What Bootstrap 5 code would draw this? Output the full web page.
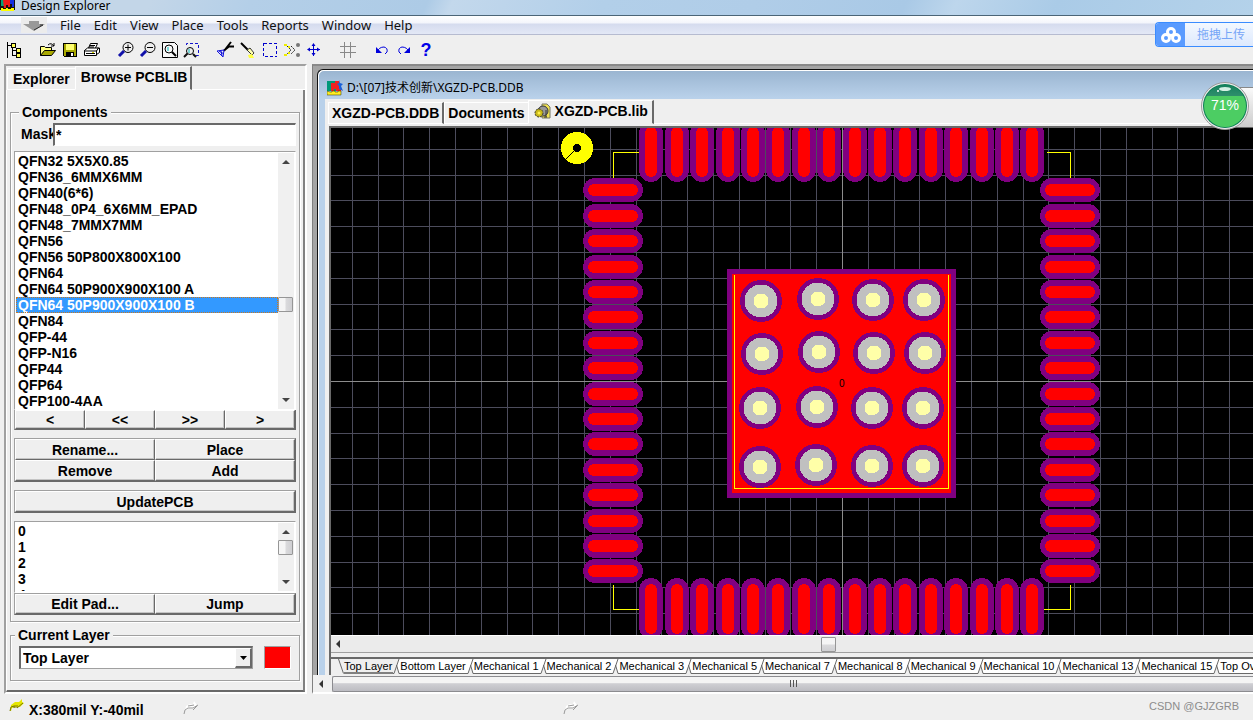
<!DOCTYPE html>
<html lang="en">
<head>
<meta charset="utf-8">
<meta name="viewport" content="width=device-width, initial-scale=1">
<title>Design Explorer</title>
<link href="https://cdn.jsdelivr.net/npm/bootstrap@5.3.0/dist/css/bootstrap.min.css" rel="stylesheet">
<style>
  :root { --face:#efefef; --shade:#a0a0a0; --dark:#696969; --ui:"Liberation Sans",Arial,sans-serif; --seg:"Noto Sans","Noto Sans CJK SC",sans-serif; }
  body { background:var(--face); color:#000; font:bold 14px/16px var(--ui); }
  button, input, select { font:inherit; color:inherit; padding:0; border-radius:0; }
  svg { display:block; flex:none; }
  .app-title { height:16px; padding:0 0 4px; background:linear-gradient(115deg,#c3d6e8 0 12%,#b4cfe8 20%,#adcbe6 34%,#c3d8ec 36%,#b2cfe9 48%,#b0cde8 60%,#a9c9e6 72%,#bdd6ec 76%,#aacbe7 84%,#b4d2ea); border-bottom:1px solid #4b6577; font:12px/11px var(--seg); }
  .menu-strip { height:19px; background:linear-gradient(#fff 0,#f3f5fb 7px,#d5dbee 8px,#e3e8f6 18px); border-bottom:1px solid #b6bbd0; font:13px/18px var(--seg); gap:13px; padding-left:21px; }
  .menu-strip a { color:#111; text-decoration:none; }
  .sys-mark { width:26px; height:16px; background:#ececec; }
  .tool-strip { height:29px; padding-left:3px; }
  .tool-strip button { width:22px; height:22px; border:0; background:none; display:grid; place-items:center; }
  .tool-strip i { width:12px; }
  .tool-strip .help-btn { font:bold 18px/20px "Liberation Sans",sans-serif; color:#0000e8; }

  .side { width:303px; margin:0 5px 0 4px; border:2px solid var(--shade); border-right-color:#fff; border-bottom:2px solid #fff; }
  .side-tabs { height:24px; padding-left:1px; align-items:flex-end; }
  .side-tabs button, .doc-tabs button { border:0; background:var(--face); border-top:1px solid #fff; border-left:1px solid #fff; border-bottom:1px solid #fff; height:22px; white-space:nowrap; padding:0 3px; }
  .side-tabs button { padding:0 5px; }
  .side-tabs .on { height:24px; border-bottom-color:var(--face); border-right:2px solid var(--dark); padding:0 3px 3px 5px; }
  .side-tabs .fill, .doc-tabs .fill { border-bottom:1px solid #fff; align-self:stretch; }
  .side-page { border-left:1px solid #fff; border-right:2px solid #808080; border-bottom:2px solid var(--dark); padding:15px 3px 8px 3px; }
  .group-box { border:1px solid var(--shade); box-shadow:1px 1px #fff, inset 1px 1px #fff; padding:0 3px 6px; margin:0; min-width:0; }
  .group-box legend { float:none; width:auto; font:inherit; margin:0 0 0 5px; padding:0 3px; background:var(--face); line-height:14px; }
  .mask-line { margin:4px 0 5px; }
  .mask-line label { width:39px; padding-left:7px; overflow:hidden; line-height:22px; }
  .mask-line input { min-width:0; height:23px; border:1px solid #fff; border-top:2px solid var(--dark); border-left:2px solid var(--dark); background:#fff; padding-left:1px; }
  .sunk { background:#fff; border:1px solid var(--shade); border-right-color:#fff; border-bottom-color:#fff; padding:1px; }
  .parts { padding-bottom:0; }
  .rows button { display:block; width:100%; border:0; background:none; text-align:left; padding-left:2px; line-height:16px; white-space:nowrap; }
  .rows button.on { background:#3399ff; color:#fff; outline:1px dotted #c87820; outline-offset:-1px; }
  .vbar { width:16px; background:#f0f0f0; }
  .vbar svg { margin:6px auto; }
  .above { flex:8 0 0; }
  .below { flex:5 0 0; }
  .knob { border:1px solid #969696; border-radius:1px; background:linear-gradient(90deg,#f5f5f5 0 45%,#dadadc 55%,#cfcfd2); width:15px; height:15px; flex:none; }
  .btn-grid { background:var(--shade); border:1px solid var(--shade); border-right-color:var(--dark); border-bottom-color:var(--dark); display:grid; }
  .btn-grid button { background:var(--face); height:21px; line-height:18px; border:1px solid #fff; border-right:1px solid var(--dark); border-bottom:1px solid var(--dark); box-shadow:inset -1px -1px #c4c4c4; }
  .btn-grid.low button { height:20px; line-height:17px; }
  .btn-grid.four { border-top:0; }
  .btn-grid.four button { height:19px; line-height:16px; }
  .two { grid-template-columns:1fr 1fr; }
  .four { grid-template-columns:repeat(4,1fr); }
  .pads { height:72px; }
  .layer-box { margin-top:6px; padding-bottom:11px; }
  .layer-box legend { margin-left:1px; }
  .layer-box > div { padding:4px 5px 0 5px; gap:11px; }
  .combo { border:1px solid var(--shade); border-top:2px solid var(--dark); border-left:2px solid var(--dark); background:#fff; position:relative; width:235px; height:23px; }
  .combo select { appearance:none; border:0; background:#fff; width:100%; height:100%; padding-left:2px; outline:0; }
  .combo span { position:absolute; right:0; top:0; bottom:0; width:17px; background:var(--face); border:1px solid #fff; border-right:2px solid var(--dark); border-bottom:2px solid var(--dark); display:grid; place-items:center; pointer-events:none; }
  .swatch { width:27px; height:23px; background:red; border:1px solid var(--shade); border-right-color:#fff; border-bottom-color:#fff; }

  .desk { background:#a5a5a5; border-top:2px solid #8a8a8a; border-left:1px solid #808080; border-bottom:2px solid #fff; min-width:0; }
  .doc-win { margin:3px 0 0 4px; border:1px solid #111; border-right:0; border-bottom:0; border-radius:6px 0 0 0; background:linear-gradient(#99b4d0,#b9d1ea 28px); box-shadow:inset 1px 1px #fff; padding-left:7px; min-width:0; }
  .doc-title { height:29px; padding:6px 2px 0; font:12px/16px var(--seg); gap:4px; }
  .doc-body { background:var(--face); min-width:0; }
  .doc-tabs { height:25px; padding:1px 0 0 3px; align-items:flex-end; }
  .doc-tabs .on { height:24px; border-bottom-color:var(--face); padding:0 4px 3px 5px; gap:3px; }
  .doc-tabs .edge { border-right:2px solid var(--dark); }
  .board-frame { margin:2px 0 0 4px; border:2px solid var(--dark); border-right:0; border-bottom:0; min-width:0; }
  .board-wrap { height:507px; min-width:0; overflow:hidden; }
  .board { background:#000; width:100%; height:100%; }
  .hbar { height:18px; background:#ebebeb; border-top:1px solid #fff; border-bottom:1px solid var(--shade); }
  .hbar .knob { background:linear-gradient(#f5f5f5 0 45%,#dadadc 55%,#cfcfd2); margin-left:20px; }
  .layer-tabs { margin-top:4px; border-top:2px solid var(--dark); height:18px; overflow:hidden; font:11px/15px var(--ui); }
  .layer-tabs button { border:0; border-bottom:1px solid var(--dark); background:#fff; height:15px; white-space:nowrap; flex:none; padding:0 1px 0 0; }
  .layer-tabs .on { background:var(--face); border-bottom:2px solid #808080; }
  .long-bar { height:17px; background:#f0f0f0; }
  .long-knob { border:1px solid #8c8c90; border-right:0; border-radius:2px 0 0 2px; background:linear-gradient(#f4f4f4 0 40%,#cfcfd3 48%,#bcbcc2); height:16px; }
  .foot { height:26px; padding:4px 14px 0 9px; }
  .foot .mark-text { font:11px/16px var(--ui); color:#8c8c8c; }
  .foot-left { width:174px; }
  .ghost { gap:364px; padding-top:3px; }
  .pill { position:absolute; right:0; top:22px; height:25px; width:98px; border:1px solid #3a8cff; border-right:0; border-radius:4px 0 0 4px; background:linear-gradient(#f3f8ff,#dde9fd); font:12px/23px var(--seg); color:#76a5f7; overflow:hidden; }
  .pill span { width:29px; background:#5a9bff; }
  .orb { position:absolute; right:3px; top:80px; }
  .orb-tab { position:absolute; right:0; top:87px; width:22px; height:40px; background:linear-gradient(#fafafa,#ccc); border-top:1px solid #888; }
</style>
</head>
<body>
<div class="d-flex flex-column min-vh-100 position-relative overflow-hidden">
  <header>
    <div class="app-title d-flex">
      <svg width="21" height="12" viewBox="0 0 21 12"><path d="M0 0h15v10H0z" fill="#111"/><path d="M1 0h3v6H1z" fill="#00a078"/><path d="M3 0h7v7H8V5H6v3H4z" fill="#f01818"/><path d="M10 0h4v7h-2V4h-2z" fill="#1030e0"/><path d="M1 11V8h2v1h3V8h2v1h3V8h3v3z" fill="#ff0"/></svg>
      <span>Design Explorer</span>
    </div>
    <nav class="menu-strip d-flex align-items-center" aria-label="Main menu">
      <span class="sys-mark"><svg width="26" height="16"><path d="M2 7h6V4h10v3h6l-11 7z" fill="#999"/><path d="M13 13l9-5h-3" stroke="#333" fill="none"/></svg></span>
      <a href="#">File</a><a href="#">Edit</a><a href="#">View</a><a href="#">Place</a><a href="#">Tools</a><a href="#">Reports</a><a href="#">Window</a><a href="#">Help</a>
    </nav>
    <div class="tool-strip d-flex align-items-center" role="toolbar" aria-label="Tools">
      <button aria-label="Panel"><svg width="16" height="18" shape-rendering="crispEdges" fill="none" stroke="#000"><path d="M1.500 1v16M1 4.500h4M6.500 7v8M6 9.500h4M6 14.500h4"/><path d="M5.500 2.500h4v4h-4zM10.500 7.500h4v4h-4zM10.500 12.500h4v4h-4z" fill="#ff5"/></svg></button>
      <i></i>
      <button aria-label="Open"><svg width="18" height="16"><path d="M1.500 13.500v-9h4l1 1h6v3" fill="#ffff80" stroke="#000"/><path d="M1.500 13.500l4-5h11l-4 5z" fill="#a8a800" stroke="#000"/><path d="M9 3q3-3 6 1m0-3v3h-3" fill="none" stroke="#000"/></svg></button>
      <button aria-label="Save"><svg width="16" height="16" shape-rendering="crispEdges"><path d="M1.500 1.500h13v13h-12l-1-1z" fill="#a8a800" stroke="#000"/><path d="M4 2h8v6H4z" fill="#ffff70"/><path d="M4 10h8v5H4z" fill="#000"/><path d="M9 11h2v3H9z" fill="#fff"/></svg></button>
      <button aria-label="Print"><svg width="18" height="16"><path d="M5.500 6l2-4.500h7L12.500 6M1.500 8.500l3-2.500h11l-2 3h-12zM1.500 8.500v5h12v-5m0 4l3-2V6h-2M7 3.500h5M6 5h5" fill="#fff" stroke="#000"/><path d="M3 11h9v1H3z"/><path d="M9 10h2v1H9z" fill="#dd0"/></svg></button>
      <i></i>
      <button aria-label="Zoom in"><svg width="18" height="18" fill="none" stroke="#000"><circle cx="11" cy="6.500" r="5"/><path d="M8 6.500h6M11 3.500v6"/><path d="M7 10l-5 5" stroke="#11a" stroke-width="3"/></svg></button>
      <button aria-label="Zoom out"><svg width="18" height="18" fill="none" stroke="#000"><circle cx="11" cy="6.500" r="5"/><path d="M8 6.500h6"/><path d="M7 10l-5 5" stroke="#11a" stroke-width="3"/></svg></button>
      <button aria-label="Fit document"><svg width="18" height="18" fill="none" stroke="#000"><path d="M1.500 1.500h12l3 3v12h-15z" fill="#f8f8f8"/><circle cx="8" cy="8" r="4"/><path d="M7 6v4" stroke="#0bb"/><path d="M11 11l4 4" stroke-width="2"/></svg></button>
      <button aria-label="Zoom area"><svg width="18" height="18" fill="none" stroke="#11c"><path d="M3.500 4V2.500h12v12H12" stroke-dasharray="3 2"/><circle cx="7" cy="10" r="3.500" stroke="#000"/><path d="M6 8v4" stroke="#0bb"/><path d="M4.500 12.500L1 16M10 13l3 3" stroke="#111" stroke-width="2"/></svg></button>
      <i></i>
      <button aria-label="Cut"><svg width="20" height="18" fill="none" stroke="#000"><path d="M15 1L8 10M18 5.500h-5l-5 4" stroke-width="2"/><path d="M8 9l-7 1 6 6zM3 10l5 3M5 10l1 5" stroke="#11d"/></svg></button>
      <button aria-label="Paint"><svg width="18" height="18"><path d="M2 2l7 7" stroke="#000" stroke-width="2"/><path d="M8 9l3-2 4 5-2 2z" fill="#ffffb0" stroke="#333"/><path d="M9 14l4-1 2 4h-5z" fill="#ffff40"/></svg></button>
      <button aria-label="Select"><svg width="16" height="16" fill="none" stroke="#00c" shape-rendering="crispEdges"><path d="M1.500 1.500h13v13h-13z" stroke-dasharray="3 2"/></svg></button>
      <button aria-label="Deselect"><svg width="18" height="16" fill="none" stroke="#222"><path d="M4 4l4 4-4 4M8 4l4 4-4 4" stroke-dasharray="2 1"/><path d="M1 3h3M1 13h3M5 5h2M5 11h2" stroke="#ee0" stroke-width="2"/><circle cx="15" cy="3" r="2" fill="#777" stroke="none"/><circle cx="15" cy="13" r="2" fill="#777" stroke="none"/></svg></button>
      <button aria-label="Move"><svg width="16" height="16" fill="none" stroke="#00c"><path d="M7.500 2v12M2 7.500h12"/><path d="M7.500 1l-2 3h4zM7.500 14l-2-3h4zM1 7.500l3-2v4zM14 7.500l-3-2v4z" fill="#00c" stroke="none"/></svg></button>
      <i></i>
      <button aria-label="Grid"><svg width="18" height="18" stroke="#888" shape-rendering="crispEdges"><path d="M5.500 1v16M11.500 1v16M1 5.500h16M1 11.500h16"/></svg></button>
      <i></i>
      <button aria-label="Undo"><svg width="16" height="14" fill="none" stroke="#00d"><path d="M3 9q2-5 7-5 4 1 3 5l-2 2"/><path d="M2 4v6h6z" fill="#00d" stroke="none"/></svg></button>
      <button aria-label="Redo"><svg width="16" height="14" fill="none" stroke="#00d"><path d="M13 9q-2-5-7-5-4 1-3 5l2 2"/><path d="M14 4v6H8z" fill="#00d" stroke="none"/></svg></button>
      <button class="help-btn">?</button>
    </div>
  </header>

  <main class="d-flex flex-grow-1">
    <aside class="side flex-shrink-0 d-flex flex-column">
      <div class="side-tabs d-flex">
        <button>Explorer</button>
        <button class="on">Browse PCBLIB</button>
        <div class="fill flex-grow-1"></div>
      </div>
      <div class="side-page flex-grow-1">
        <fieldset class="group-box">
          <legend>Components</legend>
          <div class="mask-line d-flex"><label for="mask">Mask</label><input id="mask" class="flex-grow-1" value="*"></div>
          <div class="sunk parts d-flex">
            <div class="rows flex-grow-1">
              <button>QFN32 5X5X0.85</button><button>QFN36_6MMX6MM</button><button>QFN40(6*6)</button><button>QFN48_0P4_6X6MM_EPAD</button><button>QFN48_7MMX7MM</button><button>QFN56</button><button>QFN56 50P800X800X100</button><button>QFN64</button><button>QFN64 50P900X900X100 A</button><button class="on">QFN64 50P900X900X100 B</button><button>QFN84</button><button>QFP-44</button><button>QFP-N16</button><button>QFP44</button><button>QFP64</button><button>QFP100-4AA</button>
            </div>
            <div class="vbar d-flex flex-column"><svg width="8" height="5"><path d="M0 5l4-4 4 4z" fill="#444"/></svg><div class="above"></div><div class="knob"></div><div class="below"></div><svg width="8" height="5"><path d="M0 0h8L4 4z" fill="#444"/></svg></div>
          </div>
          <div class="btn-grid four"><button>&lt;</button><button>&lt;&lt;</button><button>&gt;&gt;</button><button>&gt;</button></div>
          <div class="btn-grid two mt-2"><button>Rename...</button><button>Place</button><button>Remove</button><button>Add</button></div>
          <div class="btn-grid mt-2"><button>UpdatePCB</button></div>
          <div class="sunk pads d-flex mt-2">
            <div class="rows flex-grow-1 overflow-hidden"><button>0</button><button>1</button><button>2</button><button>3</button><button>4</button></div>
            <div class="vbar d-flex flex-column"><svg width="8" height="5"><path d="M0 5l4-4 4 4z" fill="#444"/></svg><div class="knob"></div><div class="flex-grow-1"></div><svg width="8" height="5"><path d="M0 0h8L4 4z" fill="#444"/></svg></div>
          </div>
          <div class="btn-grid low two"><button>Edit Pad...</button><button>Jump</button></div>
        </fieldset>
        <fieldset class="group-box layer-box">
          <legend><label for="layer">Current Layer</label></legend>
          <div class="d-flex">
            <div class="combo"><select id="layer"><option>Top Layer</option><option>Bottom Layer</option></select><span><svg width="7" height="4"><path d="M0 0h7L3.500 4z"/></svg></span></div>
            <div class="swatch"></div>
          </div>
        </fieldset>
      </div>
    </aside>

    <section class="desk flex-grow-1 d-flex flex-column">
      <div class="doc-win flex-grow-1 d-flex flex-column">
        <div class="doc-title d-flex align-items-center">
          <svg width="16" height="16"><path d="M0 1h9v10H0z" fill="#009878"/><path d="M4 3h4V1h4v4h2v6H9V9H7v2H4z" fill="#e22"/><path d="M12 0l1 3 3 1-2 2 2 5-4-2V6l-2-2 2-1z" fill="#1a60d8"/><path d="M0 15v-4l3 1h2v-1h3v1h3v-1h3v4z" fill="#fe2" stroke="#330" stroke-width=".5"/></svg>
          <span>D:\[07]技术创新\XGZD-PCB.DDB</span>
        </div>
        <div class="doc-body flex-grow-1 d-flex flex-column">
          <div class="doc-tabs d-flex">
            <button class="edge">XGZD-PCB.DDB</button>
            <button>Documents</button>
            <button class="on edge d-flex align-items-center"><svg width="18" height="16"><path d="M8 1h5l3 3v11H8z" fill="#eee050" stroke="#776"/><circle cx="9" cy="8" r="5" fill="#999" stroke="#333"/><circle cx="5" cy="10" r="4" fill="#c8b818" stroke="#333" stroke-dasharray="2 1"/><circle cx="5" cy="10" r="1.500" fill="#fff04a"/><path d="M12 7v7M10 14h3" stroke="#333"/></svg>XGZD-PCB.lib</button>
            <div class="fill flex-grow-1"></div>
          </div>
          <div class="board-frame">
            <div class="board-wrap"><svg class="board" role="img" aria-label="QFN64 footprint" shape-rendering="crispEdges"><g id="fp" transform="translate(511 253)"></g></svg></div>
            <div class="hbar d-flex align-items-center"><svg class="ms-1" width="5" height="8"><path d="M5 0v8L1 4z" fill="#333"/></svg><div class="w-50"></div><div class="knob"></div></div>
            <div class="layer-tabs d-flex" id="layers"></div>
          </div>
        </div>
      </div>
      <div class="long-bar d-flex align-items-center"><svg class="ms-1 me-2" width="7" height="8"><path d="M6 0v8L2 4z" fill="#333"/></svg><div class="long-knob flex-grow-1 d-grid align-items-center justify-content-center"><svg width="9" height="7" stroke="#555"><path d="M1.500 0v7M4.500 0v7M7.500 0v7"/></svg></div></div>
    </section>
  </main>

  <footer class="foot d-flex justify-content-between">
    <div class="d-flex foot-left"><svg class="me-1" width="16" height="14"><path d="M1 13l1-6 4-3h4l3-3v3l2 1-4 4H6l-3 1-1 3z" fill="#e6e600"/><path d="M1 13l1-4 3-1v2M6 7v3M8 7v3l6-5" fill="none" stroke="#777700"/></svg><span class="mt-1">X:380mil Y:-40mil</span></div>
    <div class="flex-grow-1 d-flex ghost"><svg width="16" height="14"><path d="M2 10l1-5 4-2h3l1-3 3 4-4 4H5z" fill="#fff"/><path d="M1 13l1-4 3-2h5l5-3M5 5l6-1M10 9l4-4" fill="none" stroke="#999"/></svg><svg width="16" height="14"><path d="M2 10l1-5 4-2h3l1-3 3 4-4 4H5z" fill="#fff"/><path d="M1 13l1-4 3-2h5l5-3M5 5l6-1M10 9l4-4" fill="none" stroke="#999"/></svg></div>
    <span class="mark-text">CSDN @GJZGRB</span>
  </footer>

  <button class="pill d-flex p-0"><span class="d-grid h-100 align-items-center justify-content-center"><svg width="20" height="16" fill="none" stroke="#fff" stroke-width="3"><circle cx="10" cy="5" r="3.500"/><circle cx="5" cy="11" r="3.500"/><circle cx="15" cy="11" r="3.500"/></svg></span><b class="fw-normal flex-grow-1 text-center ps-1">拖拽上传</b></button>
  <div class="orb-tab"></div>
  <svg class="orb" width="50" height="50">
    <defs><linearGradient id="cap" x2="0" y2="1"><stop stop-color="#0b7a56"/><stop offset="1" stop-color="#2f8f6c"/></linearGradient><clipPath id="disc"><circle cx="25" cy="26" r="21"/></clipPath></defs>
    <circle cx="25" cy="26" r="23.500" fill="#eee" stroke="#999"/>
    <circle cx="25" cy="26" r="22" fill="#0c7e55"/>
    <g clip-path="url(#disc)"><path d="M0 16h50v34H0z" fill="#4ccd63"/><path d="M0 0h50v16H0z" fill="url(#cap)"/><ellipse cx="25" cy="9" rx="6" ry="2" fill="#d5f0e4"/><circle cx="18" cy="11" r="1" fill="#fff"/></g>
    <text x="25" y="30" text-anchor="middle" fill="#fff" font-family="Liberation Sans, sans-serif" font-size="14" font-weight="400">71%</text>
  </svg>
</div>
<script src="https://cdn.jsdelivr.net/npm/bootstrap@5.3.0/dist/js/bootstrap.bundle.min.js"></script>
<script>
  // Footprint, in pixels from the component origin
  var out = [], purple = '#800080';
  function rect(x, y, w, h, fill, r) { out.push('<rect x="' + x + '" y="' + y + '" width="' + w + '" height="' + h + '" fill="' + fill + '" rx="' + (r || 0) + '"/>'); }
  for (var k = -60; k <= 60; k++) {
    var g = Math.round(k * 25.8);
    if (k) { rect(g, -1600, 1, 3200, '#4c4c5c'); rect(-1600, g, 3200, 1, '#4c4c5c'); }
  }
  rect(0, -1600, 1, 3200, '#8c8c8c'); rect(-1600, 0, 3200, 1, '#8c8c8c');
  out.push('<path d="M-228.500-203v-25.500h25M205-228.500h23.500v25.500M-228.500 204v24.500h25M202 228.500h26.500v-24.500" fill="none" stroke="#ff0"/>');
  for (var i = 0; i < 16; i++) {
    var c = Math.round(-190.6 + 25.4 * i);
    [-229, 228].forEach(function (s) {
      rect(s - 30, c - 12, 60, 24, purple, 12); rect(s - 25, c - 6, 50, 12, 'red', 6);
      rect(c - 12, s - 31, 24, 61, purple, 12); rect(c - 6, s - 25, 12, 50, 'red', 6);
    });
  }
  rect(-115, -112, 229, 229, purple); rect(-110, -107, 219, 219, 'red');
  out.push('<path d="M-107.500-106v213.500h214v-214" fill="none" stroke="#ff0"/>');
  [[-81,-80],[-24,-82],[31,-81],[82,-81],[-80,-27],[-23,-29],[32,-28],[83,-28],[-82,27],[-25,26],[30,27],[81,27],[-82,86],[-26,84],[30,85],[81,85]].forEach(function (p) {
    [[21, purple], [16.5, '#c0c0c0'], [7.5, '#ffffa8']].forEach(function (q) {
      out.push('<circle cx="' + p[0] + '" cy="' + p[1] + '" r="' + q[0] + '" fill="' + q[1] + '"/>');
    });
  });
  out.push('<text x="-3" y="6" font-size="10" font-weight="400">0</text>');
  out.push('<circle cx="-265" cy="-233" r="16" fill="#ff0"/><circle cx="-265" cy="-233" r="4"/><path d="M-265-233l-11 11" stroke="#000"/>');
  document.getElementById('fp').innerHTML = out.join('');

  // Layer tabs with slanted dividers
  var names = ['Top Layer', 'Bottom Layer', 'Mechanical 1', 'Mechanical 2', 'Mechanical 3', 'Mechanical 5', 'Mechanical 7', 'Mechanical 8', 'Mechanical 9', 'Mechanical 10', 'Mechanical 13', 'Mechanical 15', 'Top Overlay', 'Bottom Overlay'];
  document.getElementById('layers').innerHTML = '<svg width="13" height="15" stroke="#696969" fill="none"><path d="M7.500 0l5 14.500"/></svg>' + names.map(function (n, i) {
    return '<button class="' + (i ? '' : 'on') + '">' + n + '</button><svg width="7" height="15"><path d="M' + (i ? '0 0h7v15L3.500 6 1 14.500H0z' : '6 0h1v15L3.500 6z') + '" fill="#fff"/><path d="M0 14.500h1L6 0M3.500 6L6 14.500h1" fill="none" stroke="#696969"/></svg>';
  }).join('');
</script>
</body>
</html>
